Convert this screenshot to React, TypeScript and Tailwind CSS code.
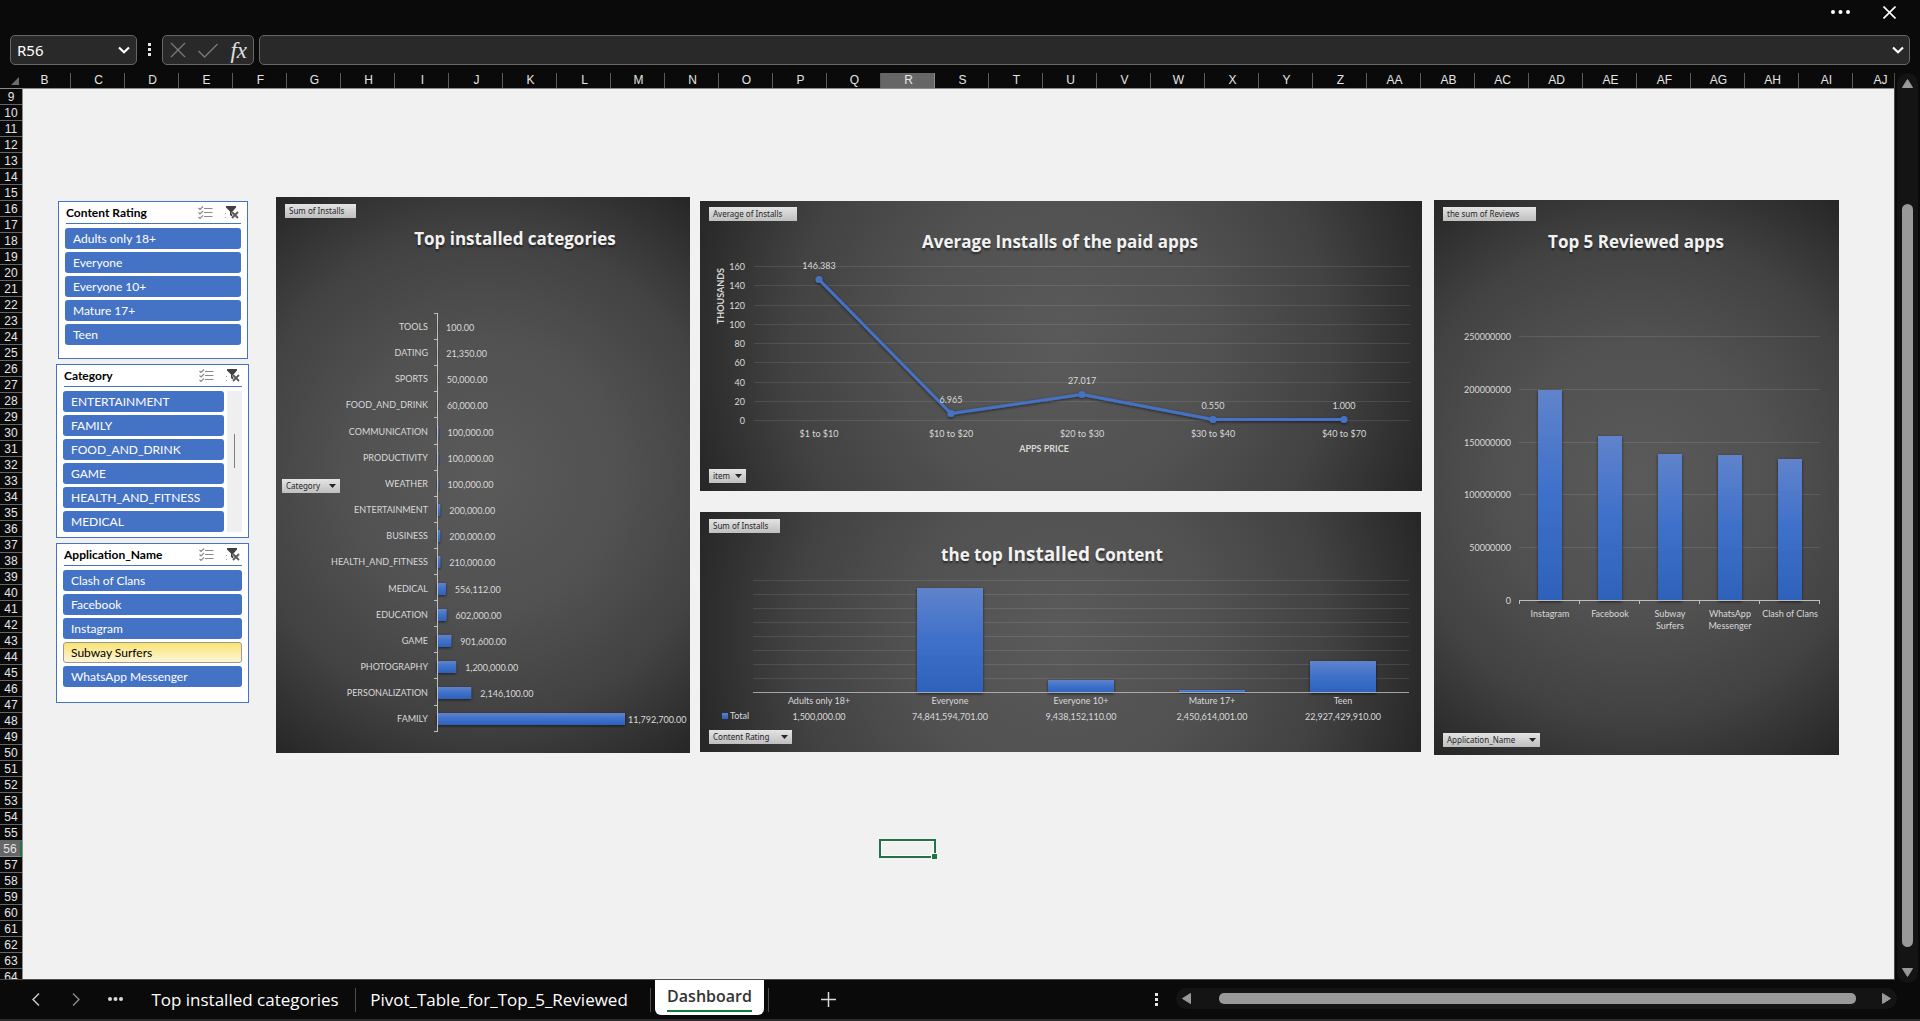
import React from 'react';

const COLUMNS = [
  'B', 'C', 'D', 'E', 'F', 'G', 'H', 'I', 'J', 'K', 'L', 'M', 'N', 'O', 'P', 'Q', 'R', 'S',
  'T', 'U', 'V', 'W', 'X', 'Y', 'Z', 'AA', 'AB', 'AC', 'AD', 'AE', 'AF', 'AG', 'AH', 'AI', 'AJ',
];
const ROWS = Array.from({ length: 56 }, (_, i) => i + 9);

const CONTENT_RATINGS = ['Adults only 18+', 'Everyone', 'Everyone 10+', 'Mature 17+', 'Teen'];
const CATEGORIES = ['ENTERTAINMENT', 'FAMILY', 'FOOD_AND_DRINK', 'GAME', 'HEALTH_AND_FITNESS', 'MEDICAL'];
const APPS = ['Clash of Clans', 'Facebook', 'Instagram', 'Subway Surfers', 'WhatsApp Messenger'];

const INSTALLS = [
  { name: 'TOOLS', value: 100 },
  { name: 'DATING', value: 21350 },
  { name: 'SPORTS', value: 50000 },
  { name: 'FOOD_AND_DRINK', value: 60000 },
  { name: 'COMMUNICATION', value: 100000 },
  { name: 'PRODUCTIVITY', value: 100000 },
  { name: 'WEATHER', value: 100000 },
  { name: 'ENTERTAINMENT', value: 200000 },
  { name: 'BUSINESS', value: 200000 },
  { name: 'HEALTH_AND_FITNESS', value: 210000 },
  { name: 'MEDICAL', value: 556112 },
  { name: 'EDUCATION', value: 602000 },
  { name: 'GAME', value: 901600 },
  { name: 'PHOTOGRAPHY', value: 1200000 },
  { name: 'PERSONALIZATION', value: 2146100 },
  { name: 'FAMILY', value: 11792700 },
];

const PRICES = [
  { name: '$1 to $10', value: 146.383, x: 119, y: 78, labelY: 68 },
  { name: '$10 to $20', value: 6.965, x: 251, y: 212, labelY: 202 },
  { name: '$20 to $30', value: 27.017, x: 382, y: 193, labelY: 183 },
  { name: '$30 to $40', value: 0.55, x: 513, y: 218, labelY: 208 },
  { name: '$40 to $70', value: 1, x: 644, y: 218, labelY: 208 },
];

const CONTENT = [
  { name: 'Adults only 18+', value: 1500000 },
  { name: 'Everyone', value: 74841594701 },
  { name: 'Everyone 10+', value: 9438152110 },
  { name: 'Mature 17+', value: 2450614001 },
  { name: 'Teen', value: 22927429910 },
];

const REVIEWS = [
  { lines: ['Instagram'], height: 211 },
  { lines: ['Facebook'], height: 165 },
  { lines: ['Subway', 'Surfers'], height: 147 },
  { lines: ['WhatsApp', 'Messenger'], height: 146 },
  { lines: ['Clash of Clans'], height: 142 },
];

const money = (n: number) => n.toLocaleString('en-US', { minimumFractionDigits: 2 });

const Caret = () => (
  <svg width="7" height="4" viewBox="0 0 7 4" aria-hidden="true">
    <path d="M0 0h7L3.5 4z" fill="#262626" />
  </svg>
);

const Chevron = () => (
  <svg width="12" height="8" viewBox="0 0 12 8" fill="none" stroke="#fff" strokeWidth="2.2" aria-hidden="true">
    <path d="M1 1.5l5 4.7 5-4.7" />
  </svg>
);

const VerticalDots = () => (
  <svg width="3" height="14" viewBox="0 0 3 14" fill="#e5e5e5" aria-hidden="true">
    <path d="M0 0h3v3H0zM0 5h3v3H0zM0 10h3v3H0z" />
  </svg>
);

const MultiSelectIcon = () => (
  <svg width="15" height="13" viewBox="0 0 15 13" fill="none" stroke="#8a8a8a" aria-hidden="true">
    <path d="M.5 2l1.500 1.500L5 .5M.5 6.500L2 8l3-3M.5 11L2 12.400l3-3" strokeWidth="1.200" />
    <path d="M6 2.500h8.500M6 6.500h8.500M6 10.500h8.500" strokeWidth="1.200" />
  </svg>
);

const ClearFilterIcon = () => (
  <svg width="14" height="13" viewBox="0 0 14 13" aria-hidden="true">
    <path d="M1 0h10v1.500L7.500 5.500V11L5 9V5.500L1 1.500z" fill="#404040" />
    <path d="M7 6l6 6M13 6l-6 6" stroke="#fff" strokeWidth="2.500" />
    <path d="M7 6l6 6M13 6l-6 6" stroke="#595959" strokeWidth="1.800" />
    <path d="M0 7h1v1H0zM0 11h1v1H0z" fill="#a3a3a3" />
  </svg>
);

interface SlicerProps {
  title: string;
  items: string[];
  selected?: string;
  className: string;
  scroll?: boolean;
}

const Slicer: React.FC<SlicerProps> = ({ title, items, selected, className, scroll }) => (
  <section className={`border border-[#4472c4] bg-white px-1.5 font-['Lato',sans-serif] ${className}`}>
    <header className="ml-px flex h-[22px] items-center border-b border-[#4472c4]">
      <h2 className="flex-1 text-xs font-bold text-black">{title}</h2>
      <button aria-label="Multi-select" className="mr-3">
        <MultiSelectIcon />
      </button>
      <button aria-label="Clear filter" className="mr-0.5">
        <ClearFilterIcon />
      </button>
    </header>
    <div className="flex gap-[3px] pt-1">
      <ul className="flex flex-1 flex-col gap-[3px]">
        {items.map((item) => (
          <li key={item} className="flex">
            <button
              className={
                item === selected
                  ? 'h-[21px] flex-1 rounded-[3px] border border-[#999] bg-linear-to-b from-[#f9e26e] to-[#fdf5d6] px-[7px] text-left text-xs leading-[19px] text-black'
                  : 'h-[21px] flex-1 rounded-[3px] bg-[#4472c4] px-2 text-left text-xs leading-[21px] text-white'
              }
            >
              {item}
            </button>
          </li>
        ))}
      </ul>
      {scroll && (
        <div className="flex w-[15px] justify-center bg-[#efefef] pt-[43px]">
          <div className="h-[34px] w-px bg-[#7f7f7f]" />
        </div>
      )}
    </div>
  </section>
);

interface FieldButtonProps {
  label: string;
  className: string;
  menu?: boolean;
}

const FieldButton: React.FC<FieldButtonProps> = ({ label, className, menu }) => (
  <button
    className={`absolute flex h-[14px] items-center justify-between bg-linear-to-b from-[#e4e4e4] to-[#bfbfbf] pr-1 pl-1 font-['Noto_Sans',sans-serif] text-[8px] leading-[14px] whitespace-nowrap text-[#262626] ${className}`}
  >
    {label}
    {menu && <Caret />}
  </button>
);

const ChartDefs = ({ id }: { id: string }) => (
  <defs>
    <linearGradient id={`${id}-bar`} x1="0" y1="0" x2="0" y2="1">
      <stop offset="0" stopColor="#6083cb" />
      <stop offset="0.5" stopColor="#3e70ca" />
      <stop offset="1" stopColor="#2e61ba" />
    </linearGradient>
    <filter id={`${id}-shadow`} x="-30%" y="-30%" width="160%" height="160%">
      <feDropShadow dx="0" dy="1" stdDeviation="1.5" floodColor="#000" floodOpacity="0.6" />
    </filter>
  </defs>
);

interface ChartProps {
  label: string;
  width: number;
  height: number;
  className: string;
  children: React.ReactNode;
  buttons: React.ReactNode;
}

const Chart: React.FC<ChartProps> = ({ label, width, height, className, children, buttons }) => (
  <figure
    className={`relative bg-[radial-gradient(circle_farthest-corner,#5a5a5a_0%,#515151_40%,#424242_70%,#262626_100%)] ${className}`}
  >
    <svg
      viewBox={`0 0 ${width} ${height}`}
      role="img"
      aria-label={label}
      className="block h-auto w-full fill-[#d9d9d9] font-['Lato',sans-serif] text-[9px]"
    >
      {children}
    </svg>
    {buttons}
  </figure>
);

const ChartTitle = ({ x, y, children }: { x: number; y: number; children: React.ReactNode }) => (
  <text
    x={x}
    y={y}
    textAnchor="middle"
    className="fill-[#f2f2f2] font-['Open_Sans',sans-serif] text-[17px] font-bold text-shadow-[0_2px_2px_rgb(0_0_0/0.5)]"
  >
    {children}
  </text>
);

const InstallsChart = () => (
  <Chart
    label="Top installed categories"
    width={414}
    height={556}
    className="ml-[27px] flex-[414]"
    buttons={
      <>
        <FieldButton label="Sum of Installs" className="top-[7px] left-[9px] w-[71px]" />
        <FieldButton label="Category" menu className="top-[282px] left-[6px] w-[58px]" />
      </>
    }
  >
    <ChartDefs id="installs" />
    <ChartTitle x={239} y={48}>Top installed categories</ChartTitle>
    {INSTALLS.map(({ name, value }, i) => {
      const mid = Math.round(130 + i * 26.15);
      const end = 161 + (value / 11792700) * 188;
      return (
        <g key={name}>
          <text x="152" y={mid + 3} textAnchor="end">{name}</text>
          <rect
            x="161"
            y={mid - 6}
            width={Math.max(1, end - 161)}
            height="12"
            fill="url(#installs-bar)"
            filter="url(#installs-shadow)"
          />
          <text x={name === 'FAMILY' ? end + 3 : end + 9} y={mid + 4}>{money(value)}</text>
        </g>
      );
    })}
    <path d="M161.5 116.500V534.500" stroke="#bfbfbf" />
    {Array.from({ length: 17 }, (_, i) => (
      <path key={i} d={`M158 ${Math.round(116 + i * 26.1) + 0.5}h4`} stroke="#bfbfbf" />
    ))}
  </Chart>
);

const PaidAppsChart = () => (
  <Chart
    label="Average Installs of the paid apps"
    width={722}
    height={290}
    className="w-full"
    buttons={
      <>
        <FieldButton label="Average of Installs" className="top-[6px] left-[9px] w-[88px]" />
        <FieldButton label="item" menu className="bottom-2 left-[9px] w-[37px]" />
      </>
    }
  >
    <ChartDefs id="paid" />
    <ChartTitle x={360} y={47}>Average Installs of the paid apps</ChartTitle>
    {Array.from({ length: 9 }, (_, i) => {
      const y = Math.round(65 + i * 19.25);
      return (
        <g key={i}>
          <path d={`M54 ${y + 0.5}H710`} stroke="#fff" strokeOpacity="0.1" />
          <text x="45" y={y + 4} textAnchor="end">{160 - i * 20}</text>
        </g>
      );
    })}
    <text transform="translate(24 95) rotate(-90)" textAnchor="middle" className="font-bold">THOUSANDS</text>
    <g filter="url(#paid-shadow)">
      <polyline
        points={PRICES.map((p) => `${p.x},${p.y + 0.5}`).join(' ')}
        fill="none"
        stroke="#4472c4"
        strokeWidth="3"
        strokeLinejoin="round"
      />
      {PRICES.map((p) => (
        <circle key={p.name} cx={p.x} cy={p.y + 0.5} r="3.5" fill="#4472c4" />
      ))}
    </g>
    {PRICES.map((p) => (
      <g key={p.name} textAnchor="middle">
        <text x={p.x} y={p.labelY}>{p.value.toFixed(3)}</text>
        <text x={p.x} y="236">{p.name}</text>
      </g>
    ))}
    <text x="344" y="251" textAnchor="middle" className="font-bold">APPS PRICE</text>
  </Chart>
);

const ContentChart = () => (
  <Chart
    label="the top Installed Content"
    width={721}
    height={240}
    className="mr-px"
    buttons={
      <>
        <FieldButton label="Sum of Installs" className="top-[7px] left-[9px] w-[71px]" />
        <FieldButton label="Content Rating" menu className="bottom-2 left-[9px] w-[83px]" />
      </>
    }
  >
    <ChartDefs id="content" />
    <ChartTitle x={352} y={49}>
      the top <tspan className="text-[19px]">Installed</tspan> Content
    </ChartTitle>
    {Array.from({ length: 8 }, (_, i) => (
      <path key={i} d={`M53 ${68.5 + i * 14}H709`} stroke="#fff" strokeOpacity="0.1" />
    ))}
    {CONTENT.map(({ name, value }, i) => {
      const mid = 119 + i * 131;
      const height = Math.max(1, Math.round((value / 80000000000) * 112));
      return (
        <g key={name} textAnchor="middle">
          <rect
            x={mid - 33}
            y={181 - height}
            width="66"
            height={height}
            fill="url(#content-bar)"
            filter="url(#content-shadow)"
          />
          <text x={mid} y="192">{name}</text>
          <text x={mid} y="208">{money(value)}</text>
        </g>
      );
    })}
    <path d="M53 180.500H709" stroke="#bfbfbf" strokeOpacity="0.8" />
    <rect x="22" y="201" width="6" height="6" fill="url(#content-bar)" />
    <text x="30" y="207">Total</text>
  </Chart>
);

const ReviewsChart = () => (
  <Chart
    label="Top 5 Reviewed apps"
    width={405}
    height={555}
    className="mt-[3px] ml-3 flex-[405]"
    buttons={
      <>
        <FieldButton label="the sum of Reviews" className="top-[7px] left-[9px] w-[93px]" />
        <FieldButton label="Application_Name" menu className="bottom-2 left-[9px] w-[97px]" />
      </>
    }
  >
    <ChartDefs id="reviews" />
    <ChartTitle x={202} y={48}>Top 5 Reviewed apps</ChartTitle>
    {Array.from({ length: 6 }, (_, i) => {
      const y = Math.round(136 + i * 52.8);
      return (
        <g key={i}>
          {i < 5 && <path d={`M85 ${y + 0.5}H386`} stroke="#fff" strokeOpacity="0.1" />}
          <text x="77" y={y + 4} textAnchor="end">{(5 - i) * 50000000}</text>
        </g>
      );
    })}
    {REVIEWS.map(({ lines, height }, i) => (
      <g key={lines[0]} textAnchor="middle">
        <rect
          x={104 + i * 60}
          y={401 - height}
          width="24"
          height={height}
          fill="url(#reviews-bar)"
          filter="url(#reviews-shadow)"
        />
        {lines.map((line, n) => (
          <text key={line} x={116 + i * 60} y={417 + n * 12}>{line}</text>
        ))}
      </g>
    ))}
    <path
      d="M85 400.500H386M85.500 400v4M145.500 400v4M205.500 400v4M265.500 400v4M325.500 400v4M385.500 400v4"
      stroke="#bfbfbf"
    />
  </Chart>
);

const TitleBar = () => (
  <div className="flex h-6 items-center justify-end gap-8 pr-6">
    <button aria-label="More options">
      <svg width="20" height="4" viewBox="0 0 20 4" fill="#fff">
        <circle cx="2" cy="2" r="2" />
        <circle cx="9.5" cy="2" r="2" />
        <circle cx="17" cy="2" r="2" />
      </svg>
    </button>
    <button aria-label="Close">
      <svg width="13" height="13" viewBox="0 0 13 13" stroke="#fff" strokeWidth="1.6">
        <path d="M.5.5l12 12M12.500.5l-12 12" />
      </svg>
    </button>
  </div>
);

const FormulaBar = () => (
  <div className="mt-[11px] mb-2 flex h-[30px] items-center pr-[10px] pl-[10px]">
    <div className="flex h-full w-[127px] items-center rounded-[5px] border border-[#666] bg-[#292929] pr-1.5 pl-1.5">
      <input
        aria-label="Name box"
        defaultValue="R56"
        className="w-0 flex-1 font-['Noto_Sans',sans-serif] text-[15px] text-white outline-none"
      />
      <button aria-label="Show names">
        <Chevron />
      </button>
    </div>
    <div className="flex w-[25px] justify-center">
      <VerticalDots />
    </div>
    <div className="flex h-full w-[92px] items-center justify-between rounded-[5px] border border-[#666] bg-[#292929] pr-1.5 pl-[7px]">
      <button aria-label="Cancel">
        <svg width="16" height="16" viewBox="0 0 16 16" stroke="#7a7a7a" strokeWidth="1.3">
          <path d="M1 1l14 14M15 1L1 15" />
        </svg>
      </button>
      <button aria-label="Enter">
        <svg width="20" height="15" viewBox="0 0 20 15" fill="none" stroke="#7a7a7a" strokeWidth="1.3">
          <path d="M.5 8l6 6L19.500 1" />
        </svg>
      </button>
      <button className="font-['Liberation_Serif',serif] text-[23px] leading-[23px] text-[#e0e0e0] italic">
        fx
      </button>
    </div>
    <div className="ml-[5px] flex h-full flex-1 items-center rounded-[5px] border border-[#666] bg-[#292929] pr-[5px] pl-2">
      <input aria-label="Formula" className="flex-1 text-[15px] text-white outline-none" />
      <button aria-label="Expand formula bar">
        <Chevron />
      </button>
    </div>
  </div>
);

const ColumnHeaders = () => (
  <div className="flex h-4 overflow-hidden border-b border-[#8c8c8c] text-xs leading-[15px] text-[#e5e5e5]">
    <div className="flex w-[23px] shrink-0 items-end justify-end pr-1 pb-[3px]">
      <svg width="8" height="8" viewBox="0 0 8 8" fill="#6b6b6b">
        <path d="M8 0v8H0z" />
      </svg>
    </div>
    {COLUMNS.map((col) => (
      <div
        key={col}
        className={
          col === 'R'
            ? 'w-[54px] shrink-0 border-r border-[#8c8c8c] bg-[#666] pl-0.5 text-center'
            : 'w-[54px] shrink-0 border-r border-[#5c5c5c] pl-0.5 text-center nth-2:w-12 nth-2:pr-1.5'
        }
      >
        {col}
      </div>
    ))}
  </div>
);

const RowHeaders = () => (
  <div className="w-[23px] shrink-0 overflow-hidden border-r border-[#8c8c8c] font-['Liberation_Sans_Narrow','Liberation_Sans',sans-serif] text-xs text-[#e5e5e5]">
    {ROWS.map((row) => (
      <div
        key={row}
        className={
          row === 56
            ? 'h-4 border-r-2 border-b border-r-[#217346] border-b-[#8c8c8c] bg-[#666] text-center leading-4'
            : 'h-4 border-b border-[#666] text-center leading-4'
        }
      >
        {row}
      </div>
    ))}
  </div>
);

const Arrow = ({ className }: { className: string }) => (
  <svg width="11" height="9" viewBox="0 0 11 9" className={className} aria-hidden="true">
    <path d="M5.500.5L10.500 8.500H.5z" fill="#999" stroke="#999" strokeLinejoin="round" />
  </svg>
);

const VerticalScrollbar = () => (
  <div className="mr-0.5 -mb-[3px] flex w-[21px] flex-col items-center rounded-full bg-[#141414] py-1.5">
    <button aria-label="Scroll up">
      <Arrow className="block" />
    </button>
    <div className="mt-[116px] mb-[21px] w-[11px] flex-1 rounded-full bg-[#999]" />
    <button aria-label="Scroll down">
      <Arrow className="block rotate-180" />
    </button>
  </div>
);

const TabBar = () => (
  <footer className="flex h-[41px] shrink-0 items-start border-b-2 border-[#2b2b2b] font-['Open_Sans',sans-serif] text-[17px]">
    <nav className="flex h-[38px] items-center pl-8">
      <button aria-label="Previous sheet" className="mr-8">
        <svg width="8" height="13" viewBox="0 0 8 13" fill="none" stroke="#d0d0d0" strokeWidth="1.4">
          <path d="M7 .5l-6 6 6 6" />
        </svg>
      </button>
      <button aria-label="Next sheet" className="mr-7">
        <svg width="8" height="13" viewBox="0 0 8 13" fill="none" stroke="#8c8c8c" strokeWidth="1.4">
          <path d="M1 .5l6 6-6 6" />
        </svg>
      </button>
      <button aria-label="All sheets">
        <svg width="15" height="4" viewBox="0 0 15 4" fill="#d9d9d9">
          <circle cx="2" cy="2" r="2" />
          <circle cx="7.5" cy="2" r="2" />
          <circle cx="13" cy="2" r="2" />
        </svg>
      </button>
    </nav>
    <a href="#categories" className="mt-2 ml-3 w-[221px] border-r border-[#4d4d4d] text-center leading-6 text-white">
      Top installed categories
    </a>
    <a href="#reviewed" className="mt-2 w-[295px] border-r border-[#4d4d4d] pr-2 text-center leading-6 text-white">
      Pivot_Table_for_Top_5_Reviewed
    </a>
    <a
      href="#dashboard"
      aria-current="page"
      className="ml-1 flex h-[35px] w-[109px] justify-center rounded-b-[6px] bg-white pt-1 text-base font-semibold text-[#333]"
    >
      <span className="h-7 border-b-2 border-[#107c41] leading-6">Dashboard</span>
    </a>
    <div className="mt-2 ml-1 h-6 w-px bg-[#4d4d4d]" />
    <button aria-label="New sheet" className="mt-3 ml-[52px]">
      <svg width="15" height="15" viewBox="0 0 15 15" stroke="#d9d9d9" strokeWidth="1.5">
        <path d="M7.500 0v15M0 7.500h15" />
      </svg>
    </button>
    <div className="flex-1" />
    <div className="mt-[13px] mr-[18px]">
      <VerticalDots />
    </div>
    <div className="mt-2 mr-[23px] flex h-[21px] w-[721px] items-center rounded-full bg-[#141414] px-[5px]">
      <button aria-label="Scroll left">
        <Arrow className="block -rotate-90" />
      </button>
      <div className="mr-[25px] ml-[27px] h-[11px] flex-1 rounded-[5px] bg-[#999]" />
      <button aria-label="Scroll right">
        <Arrow className="block rotate-90" />
      </button>
    </div>
  </footer>
);

const App: React.FC = () => {
  return (
    <div className="flex h-screen flex-col overflow-hidden bg-[#0a0a0a] font-['Liberation_Sans',sans-serif]">
      <TitleBar />
      <FormulaBar />
      <div className="flex min-h-0 flex-1">
        <div className="mr-0.5 flex min-w-0 flex-1 flex-col border-r border-b border-[#4d4d4d]">
          <ColumnHeaders />
          <div className="flex min-h-0 flex-1">
            <RowHeaders />
            <main className="relative flex min-w-0 flex-1 items-start overflow-hidden bg-[#f1f1f1] pt-[108px] pr-[55px] pl-[33px]">
              <div className="mt-1 flex w-[193px] shrink-0 flex-col gap-[5px]">
                <Slicer title="Content Rating" items={CONTENT_RATINGS} className="mr-px ml-0.5 h-[158px]" />
                <Slicer title="Category" items={CATEGORIES} scroll className="h-[174px]" />
                <Slicer title="Application_Name" items={APPS} selected="Subway Surfers" className="h-[160px]" />
              </div>
              <InstallsChart />
              <div className="mt-1 ml-[10px] flex flex-[722] flex-col gap-[21px]">
                <PaidAppsChart />
                <ContentChart />
              </div>
              <ReviewsChart />
              <div className="absolute top-[750px] left-[856px] h-[19px] w-[57px] border-2 border-[#217346]">
                <div className="h-full border border-white" />
                <div className="absolute -right-[3px] -bottom-[3px] size-[6px] border-t border-l border-white bg-[#217346]" />
              </div>
            </main>
          </div>
        </div>
        <VerticalScrollbar />
      </div>
      <TabBar />
    </div>
  );
};

export default App;
